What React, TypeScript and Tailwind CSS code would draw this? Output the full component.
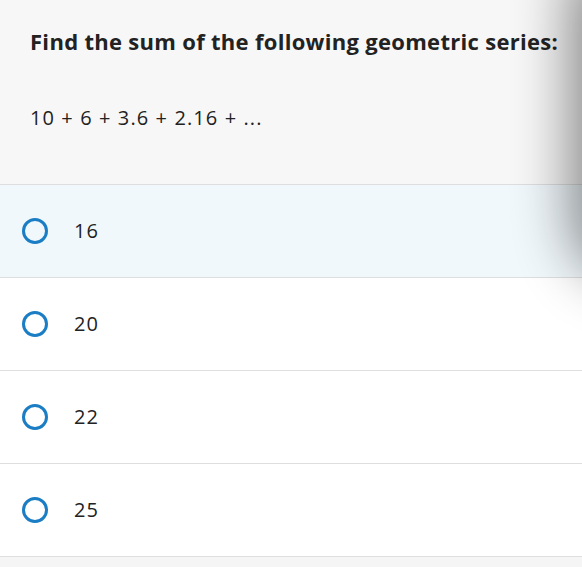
const OPTIONS = ["16", "20", "22", "25"];

export default function App() {
  return (
    <div className="relative w-full h-[567px] overflow-hidden bg-[#f5f5f5] text-[#222]" style={{ fontFamily: "'Open Sans', 'Noto Sans', sans-serif" }}>
      {/* question */}
      <div className="h-[185px] bg-[#f7f7f7] border-b border-[#dedede] px-[30px] pt-[26px]">
        <h1 className="whitespace-nowrap text-[22px] font-bold leading-[30px] tracking-[0.3px] text-[#222]">
          Find the sum of the following geometric series:
        </h1>
        <p className="mt-[47px] whitespace-nowrap text-[20px] leading-[30px] tracking-[1.1px] text-[#222]">10 + 6 + 3.6 + 2.16 + ...</p>
      </div>

      {/* answer options */}
      <ul>
        {OPTIONS.map((o, i) => (
          <li
            key={o}
            className={`h-[93px] flex items-center border-b border-[#dedede] pl-[22px] ${
              i === 0 ? "bg-[#f1f8fc]" : "bg-white"
            }`}
          >
            <span className="w-[26px] h-[26px] rounded-full border-[3px] border-[#1b7ec4]" />
            <span className="ml-[26px] text-[20px] tracking-[1px] text-[#222]">{o}</span>
          </li>
        ))}
      </ul>

      {/* shadow of panel just off-screen */}
      <div className="absolute top-[-20px] right-[-100px] w-[100px] h-[290px] rounded-bl-[50px] bg-white shadow-[0_0_55px_12px_rgba(0,0,0,0.45)]" />
    </div>
  );
}
